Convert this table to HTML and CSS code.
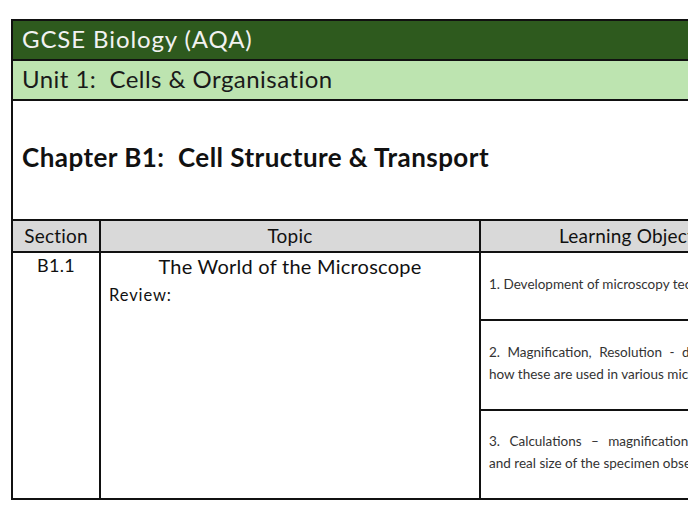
FILE: index.html
```html
<!DOCTYPE html>
<html>
<head>
<meta charset="utf-8">
<link rel="stylesheet" href="styles.css">
</head>
<body>
<div class="sheet">
  <div class="band band-dark">GCSE Biology (AQA)</div>
  <div class="band band-light">Unit 1:&nbsp; Cells &amp; Organisation</div>
  <div class="chapter">Chapter B1:&nbsp; Cell Structure &amp; Transport</div>
  <div class="tbl">
    <div class="cell head">Section</div>
    <div class="cell head head-obj">Learning Objectives</div>
    <div class="cell head head-topic">Topic</div>
    <div class="cell sec">B1.1</div>
    <div class="cell topic">
      <div class="topic-title">The World of the Microscope</div>
      <div class="review">Review:</div>
    </div>
    <div class="cell obj obj1"><p><span class="line">1. Development of microscopy techniques over time</span></p></div>
    <div class="cell obj obj2"><p><span class="line first">2. Magnification, Resolution - define each term and explain</span><span class="line">how these are used in various microscopes</span></p></div>
    <div class="cell obj obj3"><p><span class="line first wide">3. Calculations &ndash; magnification, size of the image</span><span class="line">and real size of the specimen observed</span></p></div>
  </div>
</div>
</body>
</html>
```
FILE: styles.css
```css
html, body {
  margin: 0;
  padding: 0;
  background: #fff;
  overflow: hidden;
}
body {
  font-family: Lato, "Open Sans", sans-serif;
  color: #111;
}
.sheet {
  margin: 19px 0 0 11px;
  width: 1000px;
  border-left: 2px solid #111;
  border-top: 2px solid #111;
}
.band {
  height: 40px;
  box-sizing: border-box;
  border-bottom: 2px solid #111;
  font-size: 24px;
  padding-left: 9px;
  line-height: 36px;
}
.band-dark {
  background: #2e5a1e;
  color: #f2f2f2;
  letter-spacing: 0.9px;
}
.band-light {
  background: #bde4b0;
  color: #1a1a1a;
  letter-spacing: 0.45px;
}
.chapter {
  height: 120px;
  box-sizing: border-box;
  border-bottom: 2px solid #111;
  display: flex;
  align-items: center;
  padding: 0 0 7px 9px;
  font-size: 26px;
  font-weight: 700;
  letter-spacing: 0.45px;
}
.tbl {
  display: grid;
  grid-template-columns: 88px 380px 532px;
  grid-template-rows: 32px 68px 90px 89px;
}
.cell {
  box-sizing: border-box;
  border-right: 2px solid #111;
  border-bottom: 2px solid #111;
}
.head {
  background: #d9d9d9;
  text-align: center;
  font-size: 19px;
  line-height: 29px;
  letter-spacing: 0.2px;
}
.head-topic {
  grid-column: 2;
  grid-row: 1;
}
.head-obj {
  grid-column: 3;
  grid-row: 1;
  text-align: left;
  padding-left: 78px;
}
.sec {
  grid-row: 2 / span 3;
  text-align: center;
  font-size: 18px;
  padding-top: 1px;
  letter-spacing: 0.3px;
}
.topic {
  grid-row: 2 / span 3;
  padding-top: 1px;
}
.topic-title {
  text-align: center;
  font-size: 20px;
  line-height: 24px;
  letter-spacing: 0.25px;
}
.review {
  font-size: 16.5px;
  padding-left: 8px;
  line-height: 34px;
  letter-spacing: 0.9px;
}
.obj {
  display: flex;
  align-items: center;
  padding: 0 8px 4px;
  color: #333;
  font-size: 13.5px;
  line-height: 22px;
}
.obj3 {
  padding-bottom: 6px;
}
.obj p {
  margin: 0;
}
.line {
  display: block;
  white-space: nowrap;
}
.line.first {
  word-spacing: 4px;
}
.line.wide {
  word-spacing: 6px;
}
```
